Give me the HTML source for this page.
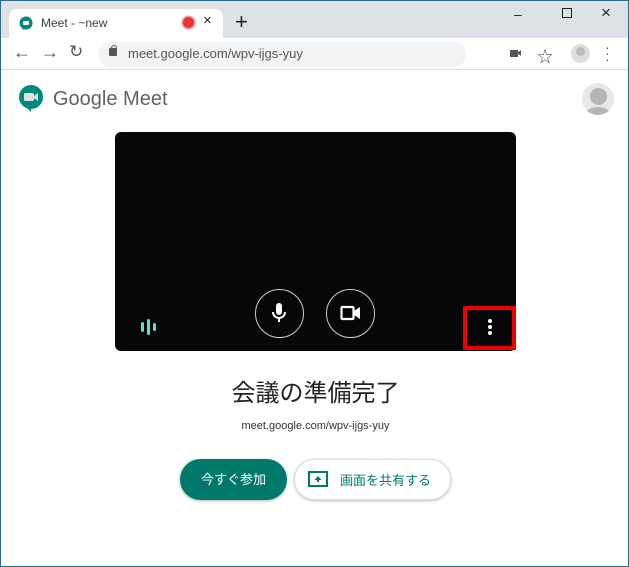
<!DOCTYPE html>
<html><head><meta charset="utf-8"><style>
*{margin:0;padding:0;box-sizing:border-box}
body{width:629px;height:567px;overflow:hidden;background:#fff;font-family:"Liberation Sans","Noto Sans CJK JP",sans-serif;position:relative;border:1px solid #2d6a8a}
.abs{position:absolute}
</style></head><body>
<div class="abs" style="left:0;top:0;width:627px;height:37px;background:#dee1e6"></div>
<div class="abs" style="left:8px;top:8px;width:214px;height:29px;background:#fff;border-radius:8px 8px 0 0"></div>
<svg class="abs" style="left:18px;top:15px" width="14" height="15" viewBox="0 0 14 15"><circle cx="7" cy="7" r="6.5" fill="#00897b"/><path d="M3 14 L7 9 L9 12Z" fill="#00897b"/><rect x="4" y="5" width="6" height="4" rx="1" fill="#fff"/></svg>
<div class="abs" style="left:40px;top:15px;font-size:12px;color:#3c4043">Meet - ~new</div>
<div class="abs" style="left:182px;top:16px;width:11px;height:11px;border-radius:50%;background:#e33;box-shadow:0 0 0 1.5px #f6a0a0"></div>
<div class="abs" style="left:202px;top:11px;font-size:15px;color:#222">×</div>
<div class="abs" style="left:234px;top:8px;font-size:22px;color:#222;font-weight:300">+</div>
<div class="abs" style="left:513px;top:5px;font-size:14px;color:#222">–</div>
<div class="abs" style="left:561px;top:7px;width:10px;height:10px;border:1.2px solid #222"></div>
<div class="abs" style="left:600px;top:2px;font-size:17px;color:#222">×</div>
<div class="abs" style="left:0;top:37px;width:627px;height:32px;background:#fff;border-bottom:1px solid #ddd"></div>
<div class="abs" style="left:12px;top:41px;font-size:18px;color:#555">←</div>
<div class="abs" style="left:40px;top:41px;font-size:18px;color:#555">→</div>
<div class="abs" style="left:68px;top:41px;font-size:17px;color:#555">↻</div>
<div class="abs" style="left:97px;top:41px;width:368px;height:25px;background:#f1f3f4;border-radius:13px"></div>
<div class="abs" style="left:108px;top:47px;width:8px;height:8px;background:#555;border-radius:1px"></div>
<div class="abs" style="left:110px;top:44px;width:6px;height:6px;border:1.3px solid #555;border-radius:3px 3px 0 0"></div>
<div class="abs" style="left:127px;top:45px;font-size:13px;color:#555">meet.google.com/wpv-ijgs-yuy</div>
<div class="abs" style="left:509px;top:49px;width:8px;height:7px;background:#555"></div>
<div class="abs" style="left:516px;top:49px;border-left:4px solid #555;border-top:3.5px solid transparent;border-bottom:3.5px solid transparent;transform:scaleX(-1)"></div>
<div class="abs" style="left:536px;top:42px;font-size:16px;color:#555">☆</div>
<div class="abs" style="left:570px;top:43px;width:19px;height:19px;border-radius:50%;background:#ddd;overflow:hidden"><div style="margin:3px auto 0;width:9px;height:9px;border-radius:50%;background:#bbb"></div></div>
<div class="abs" style="left:604px;top:43px;font-size:14px;color:#555;line-height:6px">·<br>·<br>·</div>
<svg class="abs" style="left:17px;top:84px" width="26" height="28" viewBox="0 0 26 28"><circle cx="13" cy="12" r="12" fill="#00897b"/><path d="M7 21 L13 27 L13 20Z" fill="#00897b"/><rect x="6" y="8" width="10" height="8" rx="1.5" fill="#e0e0e0"/><path d="M16 11 L20 8 L20 16 L16 13Z" fill="#e0e0e0"/></svg>
<div class="abs" style="left:52px;top:87px;font-size:20px;color:#5f6368">Google Meet</div>
<div class="abs" style="left:581px;top:82px;width:32px;height:32px;border-radius:50%;background:#e8e8e8;overflow:hidden"><div style="margin:5px auto 0;width:17px;height:17px;border-radius:50%;background:#b5b5b5"></div><div style="margin:2px auto 0;width:26px;height:16px;border-radius:50%;background:#b5b5b5"></div></div>
<div class="abs" style="left:114px;top:131px;width:401px;height:219px;background:#070707;border-radius:6px"></div>
<div class="abs" style="left:140px;top:321px;width:3px;height:10px;background:#5fe0c8;border-radius:2px"></div>
<div class="abs" style="left:146px;top:318px;width:3px;height:16px;background:#5fe0c8;border-radius:2px"></div>
<div class="abs" style="left:152px;top:322px;width:3px;height:8px;background:#5fe0c8;border-radius:2px"></div>
<div class="abs" style="left:254px;top:288px;width:49px;height:49px;border-radius:50%;border:1.5px solid #ccc"></div>
<svg class="abs" style="left:268px;top:301px" width="20" height="22" viewBox="0 0 20 22"><rect x="7" y="1" width="6" height="12" rx="3" fill="#fff"/><path d="M4 10 a6 6 0 0 0 12 0" stroke="#fff" stroke-width="2" fill="none"/><rect x="9" y="16" width="2" height="4" fill="#fff"/></svg>
<div class="abs" style="left:325px;top:288px;width:49px;height:49px;border-radius:50%;border:1.5px solid #ccc"></div>
<svg class="abs" style="left:339px;top:303px" width="22" height="18" viewBox="0 0 22 18"><rect x="1.5" y="3" width="12" height="12" rx="1" stroke="#fff" stroke-width="2.2" fill="none"/><path d="M14 7 L20 3 L20 15 L14 11Z" fill="#fff"/></svg>
<div class="abs" style="left:462px;top:305px;width:53px;height:44px;border:4px solid #e00"></div>
<div class="abs" style="left:487px;top:318px;width:4px;height:4px;border-radius:50%;background:#fff"></div>
<div class="abs" style="left:487px;top:324px;width:4px;height:4px;border-radius:50%;background:#fff"></div>
<div class="abs" style="left:487px;top:330px;width:4px;height:4px;border-radius:50%;background:#fff"></div>
<div class="abs" style="left:0;top:372px;width:629px;text-align:center;font-size:24px;color:#222">会議の準備完了</div>
<div class="abs" style="left:0;top:419px;width:629px;text-align:center;font-size:11px;color:#333">meet.google.com/wpv-ijgs-yuy</div>
<div class="abs" style="left:179px;top:458px;width:107px;height:41px;border-radius:21px;background:#00796b;color:#fff;font-size:13px;text-align:center;line-height:41px;box-shadow:0 1px 3px rgba(0,0,0,.3)">今すぐ参加</div>
<div class="abs" style="left:293px;top:458px;width:157px;height:41px;border-radius:21px;background:#fff;border:1px solid #ddd;box-shadow:0 1px 3px rgba(0,0,0,.25)"></div>
<svg class="abs" style="left:307px;top:470px" width="20" height="16" viewBox="0 0 20 16"><rect x="1" y="1" width="18" height="14" stroke="#00796b" stroke-width="2" fill="none"/><path d="M10 5 L13.5 9 L6.5 9Z" fill="#00796b"/><rect x="9" y="8" width="2" height="3" fill="#00796b"/></svg>
<div class="abs" style="left:339px;top:469px;font-size:13px;color:#00796b">画面を共有する</div>
</body></html>
